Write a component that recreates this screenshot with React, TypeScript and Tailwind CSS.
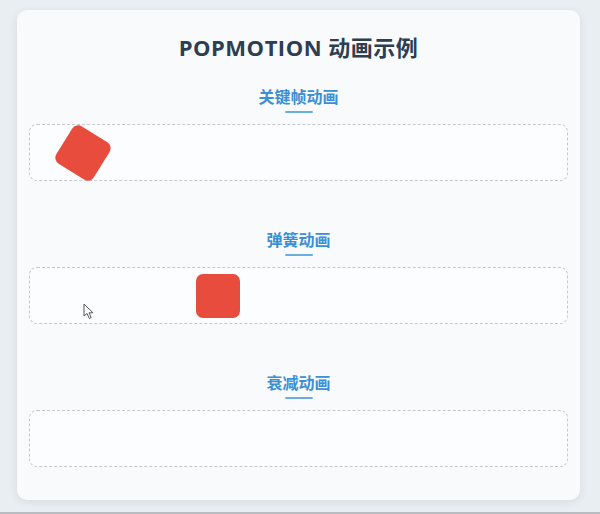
import React from "react"

const font = { fontFamily: '"Open Sans", "Noto Sans", "Noto Sans CJK SC", sans-serif' }

function Section({ title, children }: { title: string; children?: React.ReactNode }) {
  return (
    <div className="flex flex-col items-center">
      <h3 className="text-[16px] leading-[22px] font-bold text-[#3b8fd4]">{title}</h3>
      <div className="mt-[3px] h-[2px] w-[28px] bg-[#6aaee0] rounded-full" />
      <div className="relative mt-[11px] w-full h-[57px] rounded-[8px] border border-dashed border-[#c4c8ce] bg-[#fcfdfe] flex items-center">
        {children}
      </div>
    </div>
  )
}

function Cursor() {
  return (
    <svg className="absolute left-[53px] top-[35px]" width="12" height="17" viewBox="0 0 12 17">
      <path d="M1 1 L1 13 L4 10.5 L6.3 15.5 L8.2 14.6 L6 9.8 L10 9.8 Z" fill="#fff" stroke="#555" strokeWidth="1" strokeLinejoin="round" />
    </svg>
  )
}

export default function App() {
  return (
    <div className="w-[600px] h-[514px] bg-[#e9eef2] border-b-2 border-[#b9bdc1] pt-[10px]" style={font}>
      <div className="ml-[17px] w-[563px] h-[490px] rounded-[10px] bg-[#f8fafc] shadow-[0_2px_10px_rgba(0,0,0,0.08)] px-3 pt-[22px]">
        <h1 className="text-center text-[22px] leading-[30px] font-bold tracking-[0.5px] text-[#2c3e50]">
          POPMOTION 动画示例
        </h1>
        <div className="mt-[24px] flex flex-col gap-[48px]">
          <Section title="关键帧动画">
            <div className="ml-[31px] w-[44px] h-[44px] rounded-[7px] bg-[#e74c3c] rotate-[32deg]" />
          </Section>
          <Section title="弹簧动画">
            <Cursor />
            <div className="ml-[166px] w-[44px] h-[44px] rounded-[7px] bg-[#e74c3c]" />
          </Section>
          <Section title="衰减动画" />
        </div>
      </div>
    </div>
  )
}
